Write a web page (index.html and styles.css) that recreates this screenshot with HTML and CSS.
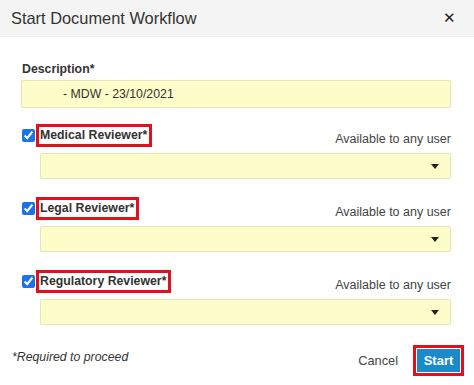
FILE: index.html
```html
<!DOCTYPE html>
<html>
<head>
    <title>Start Document Workflow</title>
    <link rel="stylesheet" href="styles.css">
</head>
<body>
    <div class="dialog">
        <div class="dialog-header">
            <h2>Start Document Workflow</h2>
            <span class="close">&#x2715;</span>
        </div>
        <div class="dialog-body">
            <label class="field-label">Description*</label>
            <div class="text-input">- MDW - 23/10/2021</div>

            <div class="reviewer">
                <div class="reviewer-head">
                    <input type="checkbox" checked>
                    <span class="reviewer-name">Medical Reviewer*</span>
                    <span class="avail">Available to any user</span>
                </div>
                <div class="select-box"><span class="caret"></span></div>
            </div>

            <div class="reviewer">
                <div class="reviewer-head">
                    <input type="checkbox" checked>
                    <span class="reviewer-name">Legal Reviewer*</span>
                    <span class="avail">Available to any user</span>
                </div>
                <div class="select-box"><span class="caret"></span></div>
            </div>

            <div class="reviewer">
                <div class="reviewer-head">
                    <input type="checkbox" checked>
                    <span class="reviewer-name">Regulatory Reviewer*</span>
                    <span class="avail">Available to any user</span>
                </div>
                <div class="select-box"><span class="caret"></span></div>
            </div>
        </div>
        <div class="dialog-footer">
            <span class="required">*Required to proceed</span>
            <span class="cancel">Cancel</span>
            <button class="start">Start</button>
        </div>
    </div>
</body>
</html>
```

FILE: styles.css
```css
body {
    margin: 0;
    font-family: "Liberation Sans", Arial, sans-serif;
    background: #fff;
    color: #333;
}
.dialog {
    width: 474px;
    height: 385px;
    overflow: hidden;
}
.dialog-header {
    height: 36px;
    background-color: #f4f4f4;
    border-bottom: 1px solid #ececec;
    display: flex;
    align-items: center;
    justify-content: space-between;
    padding: 0 18px 0 11px;
}
.dialog-header h2 {
    margin: 0;
    font-size: 16.4px;
    font-weight: normal;
    color: #333;
}
.close {
    font-size: 15px;
    color: #222;
}
.dialog-body {
    padding: 25px 23px 0 21px;
}
.field-label {
    display: block;
    font-size: 12.3px;
    font-weight: bold;
    color: #333;
    margin: 0 0 4px 1px;
}
.text-input {
    height: 26px;
    line-height: 26px;
    background-color: #fdfdc9;
    border: 1px solid #e6e4b8;
    border-radius: 2px;
    padding-left: 41px;
    font-size: 12.3px;
    color: #333;
}
.reviewer {
    margin-top: 15px;
}
.reviewer + .reviewer {
    margin-top: 17px;
}
.reviewer-head {
    display: flex;
    align-items: center;
    height: 25px;
}
.reviewer-head input {
    margin: 0 1px 0 1px;
    width: 13px;
    height: 13px;
    accent-color: #1a73e8;
}
.reviewer-name {
    border: 3px solid #e0101c;
    padding: 1px 2px 2px 1px;
    font-size: 12.3px;
    font-weight: bold;
    color: #333;
}
.avail {
    margin-left: auto;
    font-size: 12.5px;
    color: #444;
    padding-top: 6px;
}
.select-box {
    margin: 5px 0 0 19px;
    height: 24px;
    background-color: #fdfdc9;
    border: 1px solid #e6e4b8;
    border-radius: 2px;
    display: flex;
    align-items: center;
    justify-content: flex-end;
    padding-right: 11px;
}
.caret {
    width: 0;
    height: 0;
    border-left: 4px solid transparent;
    border-right: 4px solid transparent;
    border-top: 5px solid #222;
}
.dialog-footer {
    display: flex;
    align-items: center;
    padding: 20px 10px 0 12px;
}
.required {
    font-size: 12.3px;
    font-style: italic;
    color: #333;
    margin-bottom: 8px;
}
.cancel {
    margin-left: auto;
    font-size: 12.8px;
    color: #444;
    margin-right: 15px;
}
.start {
    border: 3px solid #e0101c;
    background-color: #1a8acb;
    color: #fff;
    font-family: "Liberation Sans", Arial, sans-serif;
    font-size: 13px;
    font-weight: bold;
    width: 51px;
    height: 31px;
    padding: 0;
    box-shadow: inset 0 0 0 1px #fff;
}
```
